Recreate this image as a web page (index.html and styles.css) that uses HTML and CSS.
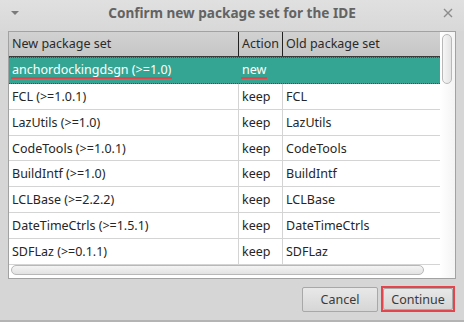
FILE: index.html
```html
<!DOCTYPE html>
<html>
<head>
<meta charset="utf-8">
<link rel="stylesheet" href="styles.css">
</head>
<body>
<div class="window">
  <div class="titlebar">
    <span class="menu-arrow"></span>
    <span class="title">Confirm new package set for the IDE</span>
    <svg class="close" width="10" height="10" viewBox="0 0 10 10"><path d="M1 1L9 9M9 1L1 9" stroke="#8c8c8c" stroke-width="1.4" fill="none"/></svg>
  </div>
  <div class="panel">
    <div class="grid-area">
      <div class="row header">
        <div class="cell">New package set</div>
        <div class="cell">Action</div>
        <div class="cell">Old package set</div>
      </div>
      <div class="row selected">
        <div class="cell"><span class="mark">anchordockingdsgn (&gt;=1.0)</span></div>
        <div class="cell"><span class="mark">new</span></div>
        <div class="cell"></div>
      </div>
      <div class="row"><div class="cell">FCL (&gt;=1.0.1)</div><div class="cell">keep</div><div class="cell">FCL</div></div>
      <div class="row"><div class="cell">LazUtils (&gt;=1.0)</div><div class="cell">keep</div><div class="cell">LazUtils</div></div>
      <div class="row"><div class="cell">CodeTools (&gt;=1.0.1)</div><div class="cell">keep</div><div class="cell">CodeTools</div></div>
      <div class="row"><div class="cell">BuildIntf (&gt;=1.0)</div><div class="cell">keep</div><div class="cell">BuildIntf</div></div>
      <div class="row"><div class="cell">LCLBase (&gt;=2.2.2)</div><div class="cell">keep</div><div class="cell">LCLBase</div></div>
      <div class="row"><div class="cell">DateTimeCtrls (&gt;=1.5.1)</div><div class="cell">keep</div><div class="cell">DateTimeCtrls</div></div>
      <div class="row"><div class="cell">SDFLaz (&gt;=0.1.1)</div><div class="cell">keep</div><div class="cell">SDFLaz</div></div>
      <div class="hscroll"></div>
    </div>
    <div class="vscroll-col">
      <div class="vthumb"></div>
    </div>
  </div>
  <div class="footer">
    <button class="btn cancel">Cancel</button>
    <div class="highlight"><button class="btn">Continue</button></div>
  </div>
</div>
</body>
</html>
```
FILE: styles.css
```css
html, body {
  margin: 0;
  padding: 0;
}
body {
  width: 464px;
  height: 322px;
  overflow: hidden;
  font-family: "Noto Sans", "Open Sans", sans-serif;
  background: #d2d2d2;
}
.window {
  width: 464px;
  height: 322px;
  box-sizing: border-box;
  background: #d6d6d6;
  border-bottom: 2px solid #b4b4b4;
  display: flex;
  flex-direction: column;
}
.titlebar {
  height: 31px;
  flex: none;
  display: flex;
  align-items: center;
  position: relative;
  background: linear-gradient(#e0e0e0, #d8d8d8);
}
.menu-arrow {
  position: absolute;
  left: 11px;
  top: 11px;
  width: 0;
  height: 0;
  border-left: 4px solid transparent;
  border-right: 4px solid transparent;
  border-top: 4px solid #7a7a7a;
}
.title {
  flex: 1;
  text-align: center;
  font-size: 13.6px;
  font-weight: bold;
  color: #636363;
  margin-top: -6px;
}
.close {
  position: absolute;
  right: 11px;
  top: 8px;
}
.panel {
  margin: 0 8px 0 8px;
  height: 248px;
  box-sizing: border-box;
  border: 1px solid #a2a2a2;
  background: #ffffff;
  display: flex;
  flex: none;
}
.grid-area {
  flex: 1;
  display: flex;
  flex-direction: column;
}
.row {
  display: grid;
  grid-template-columns: 230px 44px 1fr;
  height: 26px;
  box-sizing: border-box;
  border-bottom: 1px solid #d4d4d4;
  font-size: 12.5px;
  color: #262626;
}
.cell {
  padding-left: 3px;
  display: flex;
  align-items: center;
  white-space: nowrap;
  overflow: hidden;
  border-right: 1px solid #d4d4d4;
}
.row .cell:last-child {
  border-right: none;
}
.header {
  height: 25px;
  background: linear-gradient(#d2d2d2, #c6c6c6);
  border-bottom: 1px solid #3a3a3a;
  color: #2a2a2a;
}
.header .cell {
  border-right: 1px solid #222222;
}
.selected {
  background: #35a593;
  color: #ffffff;
  border-top: 1px dotted #1f5f55;
  border-bottom: 1px dotted #1f5f55;
  height: 27px;
}
.selected .cell {
  border-right: none;
  padding-top: 1px;
}
.mark {
  border-bottom: 2px solid #e2464c;
  line-height: 15px;
  padding-right: 1px;
  margin-left: -1px;
  padding-left: 1px;
}
.hscroll {
  margin: auto 16px 3px 2px;
  height: 8px;
  border: 1px solid #b8b8b8;
  border-radius: 5px;
  background: linear-gradient(#f4f4f4, #e2e2e2);
}
.vscroll-col {
  width: 15px;
  flex: none;
  background: linear-gradient(90deg, #ffffff, #f4f4f4);
  padding-top: 2px;
  box-sizing: border-box;
}
.vthumb {
  margin-left: 2px;
  width: 8px;
  height: 48px;
  border: 1px solid #b8b8b8;
  border-radius: 5px;
  background: linear-gradient(90deg, #f6f6f6, #e4e4e4);
}
.footer {
  flex: 1;
  display: flex;
  justify-content: flex-end;
  align-items: flex-start;
  padding: 7px 9px 0 0;
  gap: 3px;
}
.btn {
  font-family: "Noto Sans", "Open Sans", sans-serif;
  font-size: 12.5px;
  color: #3a3a3a;
  height: 26px;
  padding: 0;
  border: 1px solid #a8a8a8;
  border-radius: 2px;
  background: linear-gradient(#e8e8e8, #d6d6d6);
  margin: 0;
}
.cancel {
  margin-top: 1px;
  width: 76px;
  height: 25px;
}
.highlight {
  border: 2px solid #e2464c;
  display: flex;
}
.highlight .btn {
  width: 70px;
  height: 22px;
}
```
